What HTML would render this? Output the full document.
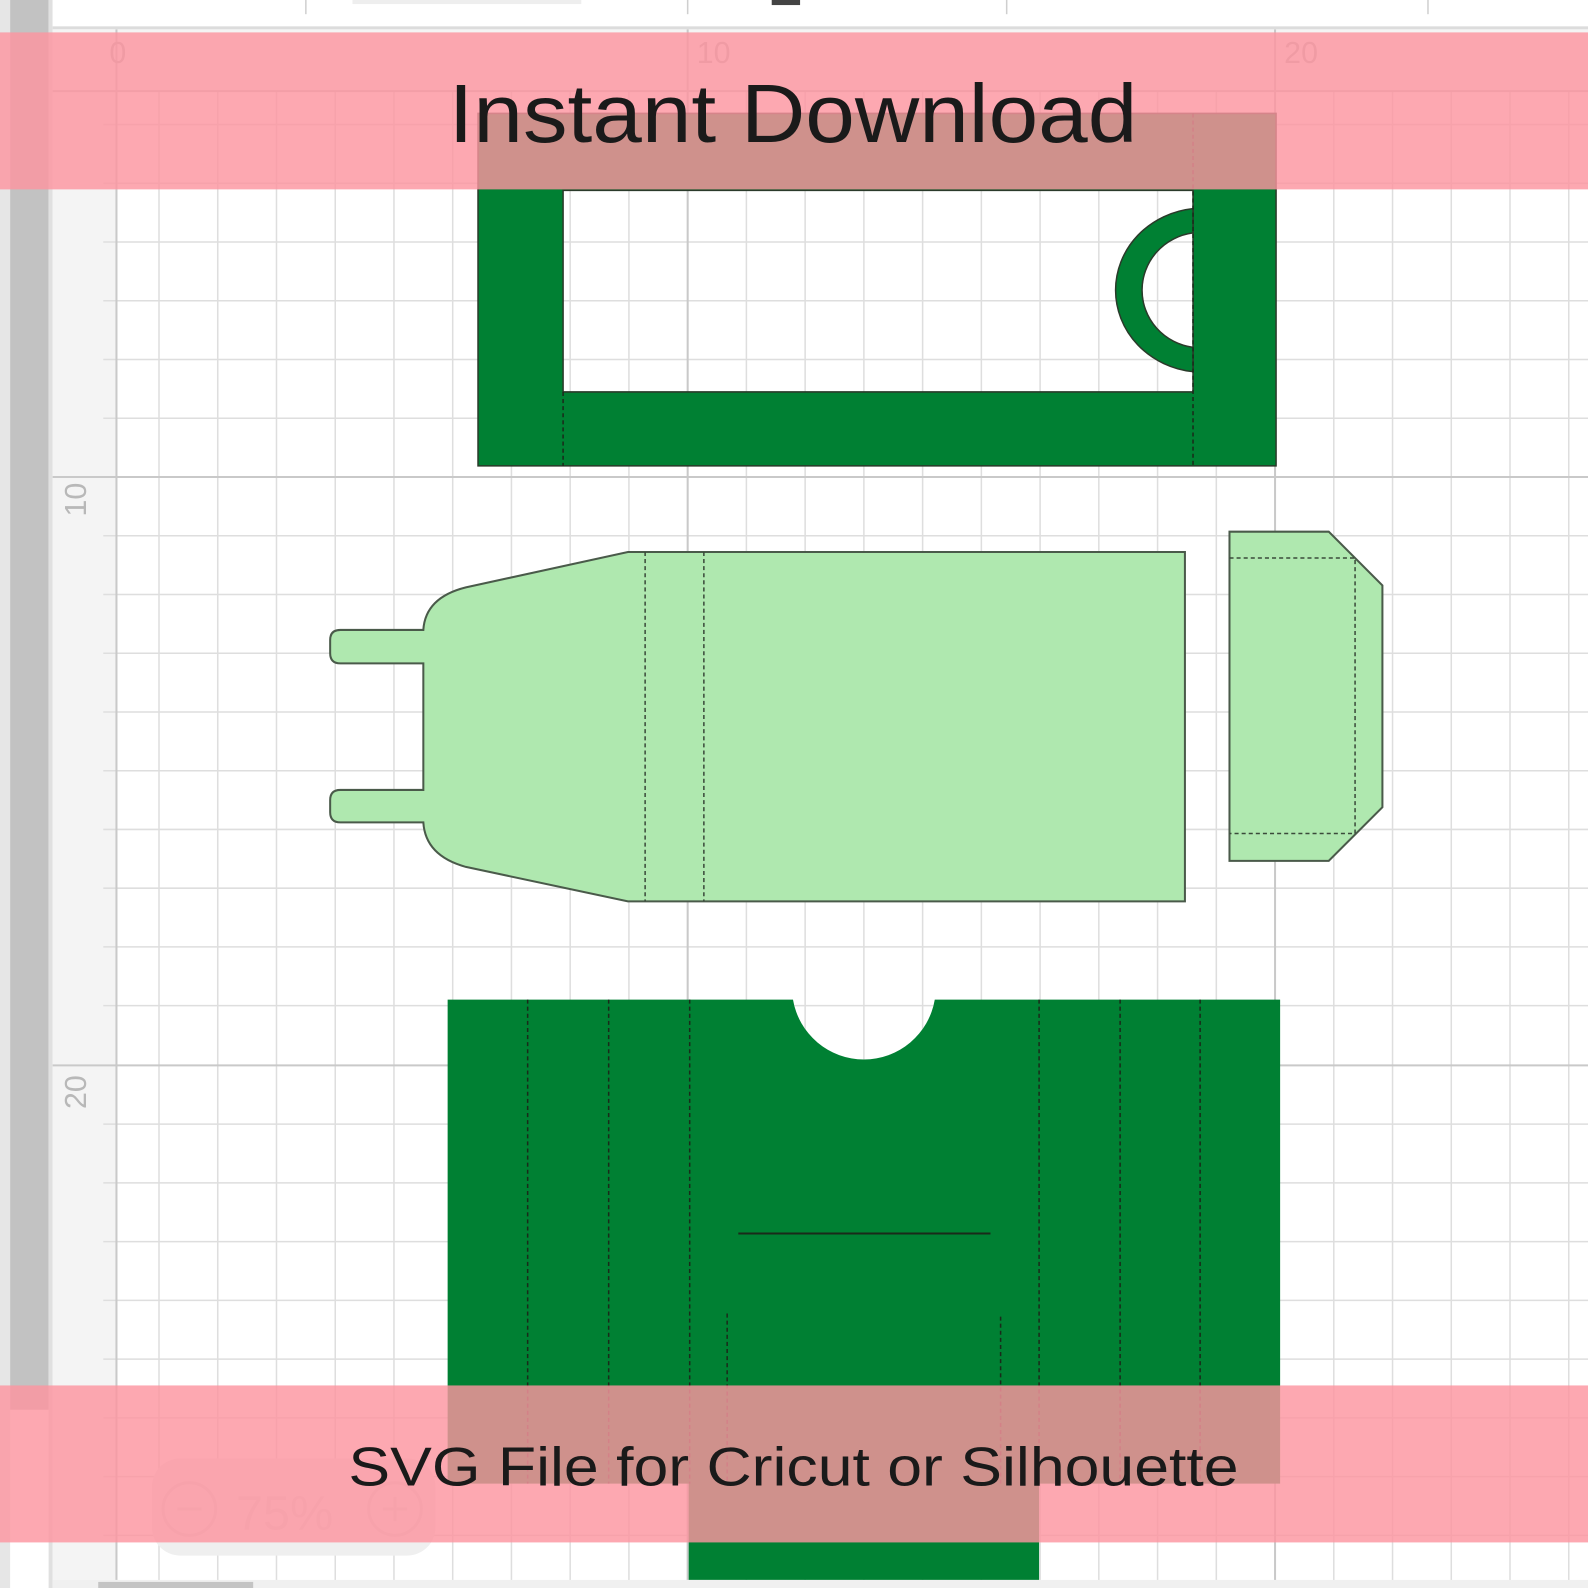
<!DOCTYPE html>
<html><head><meta charset="utf-8"><style>
html,body{margin:0;padding:0;width:1588px;height:1588px;overflow:hidden;background:#fff}
svg{display:block}
</style></head><body>
<svg width="1588" height="1588" viewBox="0 0 1568 1568" xmlns="http://www.w3.org/2000/svg" font-family="Liberation Sans, sans-serif">
<rect width="1568" height="1568" fill="#fff"/>
<rect x="0" y="0" width="10" height="1568" fill="#e6e6e6"/>
<rect x="10" y="0" width="38" height="1392" fill="#c2c2c2"/>
<rect x="48" y="0" width="4" height="1568" fill="#e0e0e0"/>
<rect x="52" y="0" width="1516" height="27" fill="#fff"/>
<rect x="52" y="26" width="1516" height="3" fill="#dcdcdc"/>
<g stroke="#cfcfcf" stroke-width="1.5"><line x1="302" y1="0" x2="302" y2="14"/><line x1="679" y1="0" x2="679" y2="14"/><line x1="994" y1="0" x2="994" y2="14"/><line x1="1410" y1="0" x2="1410" y2="14"/></g>
<rect x="348" y="0" width="226" height="4" fill="#eee"/>
<rect x="762" y="0" width="28" height="5" fill="#444"/>
<rect x="52" y="29" width="1516" height="61" fill="#f4f4f4"/>
<rect x="52" y="29" width="63" height="1539" fill="#f4f4f4"/>
<g stroke="#dedede" stroke-width="1.5">
<line x1="157" y1="90" x2="157" y2="1568"/><line x1="215" y1="90" x2="215" y2="1568"/><line x1="273" y1="90" x2="273" y2="1568"/><line x1="331" y1="90" x2="331" y2="1568"/><line x1="389" y1="90" x2="389" y2="1568"/><line x1="447" y1="90" x2="447" y2="1568"/><line x1="505" y1="90" x2="505" y2="1568"/><line x1="563" y1="90" x2="563" y2="1568"/><line x1="621" y1="90" x2="621" y2="1568"/>
<line x1="737" y1="90" x2="737" y2="1568"/><line x1="795" y1="90" x2="795" y2="1568"/><line x1="853" y1="90" x2="853" y2="1568"/><line x1="911" y1="90" x2="911" y2="1568"/><line x1="969" y1="90" x2="969" y2="1568"/><line x1="1027" y1="90" x2="1027" y2="1568"/><line x1="1085" y1="90" x2="1085" y2="1568"/><line x1="1143" y1="90" x2="1143" y2="1568"/><line x1="1201" y1="90" x2="1201" y2="1568"/>
<line x1="1317" y1="90" x2="1317" y2="1568"/><line x1="1375" y1="90" x2="1375" y2="1568"/><line x1="1433" y1="90" x2="1433" y2="1568"/><line x1="1491" y1="90" x2="1491" y2="1568"/><line x1="1549" y1="90" x2="1549" y2="1568"/>
<line x1="102" y1="123" x2="1568" y2="123"/><line x1="102" y1="181" x2="1568" y2="181"/><line x1="102" y1="239" x2="1568" y2="239"/><line x1="102" y1="297" x2="1568" y2="297"/><line x1="102" y1="355" x2="1568" y2="355"/><line x1="102" y1="413" x2="1568" y2="413"/>
<line x1="102" y1="529" x2="1568" y2="529"/><line x1="102" y1="587" x2="1568" y2="587"/><line x1="102" y1="645" x2="1568" y2="645"/><line x1="102" y1="703" x2="1568" y2="703"/><line x1="102" y1="761" x2="1568" y2="761"/><line x1="102" y1="819" x2="1568" y2="819"/><line x1="102" y1="877" x2="1568" y2="877"/><line x1="102" y1="935" x2="1568" y2="935"/><line x1="102" y1="993" x2="1568" y2="993"/>
<line x1="102" y1="1110" x2="1568" y2="1110"/><line x1="102" y1="1168" x2="1568" y2="1168"/><line x1="102" y1="1226" x2="1568" y2="1226"/><line x1="102" y1="1284" x2="1568" y2="1284"/><line x1="102" y1="1342" x2="1568" y2="1342"/><line x1="102" y1="1400" x2="1568" y2="1400"/><line x1="102" y1="1458" x2="1568" y2="1458"/><line x1="102" y1="1516" x2="1568" y2="1516"/>
</g>
<g stroke="#c9c9c9" stroke-width="2">
<line x1="115" y1="29" x2="115" y2="1568"/><line x1="679" y1="29" x2="679" y2="1568"/><line x1="1259" y1="29" x2="1259" y2="1568"/>
<line x1="52" y1="471" x2="1568" y2="471"/><line x1="52" y1="1052" x2="1568" y2="1052"/>
<line x1="52" y1="90" x2="1568" y2="90"/>
</g>
<g fill="#b8b8b8" font-size="30">
<text x="688" y="62">10</text><text x="1268" y="62">20</text><text x="108" y="62">0</text>
<text transform="translate(85,510) rotate(-90)">10</text>
<text transform="translate(85,1095) rotate(-90)">20</text>
</g>
<rect x="150" y="1440" width="280" height="96" rx="28" fill="#efefef"/>
<circle cx="187" cy="1490" r="26" fill="none" stroke="#ddd" stroke-width="3"/>
<line x1="175" y1="1490" x2="199" y2="1490" stroke="#ddd" stroke-width="3"/>
<text x="233" y="1510" font-size="48" fill="#ddd">75%</text>
<circle cx="390" cy="1490" r="26" fill="none" stroke="#ddd" stroke-width="3"/>
<line x1="378" y1="1490" x2="402" y2="1490" stroke="#ddd" stroke-width="3"/><line x1="390" y1="1478" x2="390" y2="1502" stroke="#ddd" stroke-width="3"/>
<rect x="52" y="1560" width="1516" height="8" fill="#f0f0f0"/>
<rect x="97" y="1562" width="153" height="6" fill="#c4c4c4"/>

<path d="M472 112 H1260 V460 H472 Z M556 188 V387 H1178 V188 Z" fill="#008033" fill-rule="evenodd" stroke="#2a3a2a" stroke-width="1.5"/>
<path d="M1178 206 A86 81 0 0 0 1178 367 V343 A58 57 0 0 1 1178 230 Z" fill="#008033" stroke="#2a3a2a" stroke-width="1.5"/>
<g stroke="#1a2a1a" stroke-width="1.5" stroke-dasharray="4 3" fill="none">
<line x1="556" y1="387" x2="556" y2="460"/><line x1="1178" y1="112" x2="1178" y2="460"/>
</g>

<path d="M620 545 H1170 V890 H620 L460 856 Q420 845 418 812 H336 Q326 812 326 802 V790 Q326 780 336 780 H418 V655 H336 Q326 655 326 645 V632 Q326 622 336 622 H418 Q420 590 460 580 Z" fill="#afe8af" stroke="#4a5a4a" stroke-width="2"/>
<g stroke="#3a4a3a" stroke-width="1.5" stroke-dasharray="4 3" fill="none">
<line x1="637" y1="545" x2="637" y2="890"/><line x1="695" y1="545" x2="695" y2="890"/>
</g>
<path d="M1214 525 H1312 L1365 578 V797 L1312 850 H1214 Z" fill="#afe8af" stroke="#4a5a4a" stroke-width="2"/>
<g stroke="#3a4a3a" stroke-width="1.5" stroke-dasharray="4 3" fill="none">
<path d="M1214 551 H1338 V823 H1214"/>
</g>

<path d="M442 987 H783 A71 71 0 0 0 923 987 H1264 V1465 H1026 V1560 H680 V1465 H442 Z" fill="#008033"/>
<g stroke="#1a2a1a" stroke-width="1.5" stroke-dasharray="4 3" fill="none">
<line x1="521" y1="987" x2="521" y2="1465"/><line x1="601" y1="987" x2="601" y2="1465"/><line x1="681" y1="987" x2="681" y2="1465"/>
<line x1="1026" y1="987" x2="1026" y2="1465"/><line x1="1106" y1="987" x2="1106" y2="1465"/><line x1="1185" y1="987" x2="1185" y2="1465"/>
<line x1="718" y1="1297" x2="718" y2="1465"/><line x1="988" y1="1300" x2="988" y2="1465"/>
</g>
<line x1="729" y1="1218" x2="978" y2="1218" stroke="#1a2a1a" stroke-width="2"/>

<rect x="0" y="32" width="1568" height="155" fill="rgba(252,149,160,0.82)"/>
<rect x="0" y="1368" width="1568" height="155" fill="rgba(252,149,160,0.82)"/>
<text x="443" y="140" font-size="82" fill="#1a1a1a" textLength="680" lengthAdjust="spacingAndGlyphs">Instant Download</text>
<text x="344" y="1467" font-size="54" fill="#1a1a1a" textLength="879" lengthAdjust="spacingAndGlyphs">SVG File for Cricut or Silhouette</text>
</svg>
</body></html>
